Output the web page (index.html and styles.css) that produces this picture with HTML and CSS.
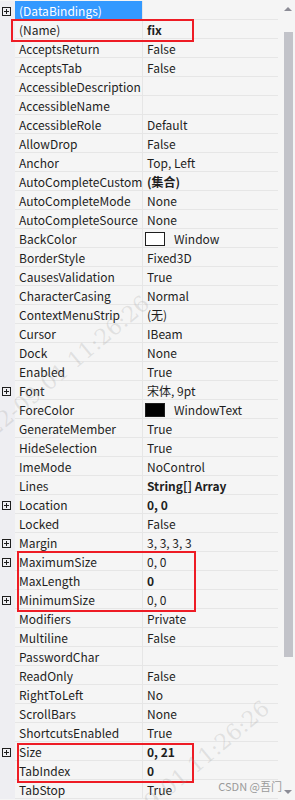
FILE: index.html
```html
<!DOCTYPE html>
<html lang="zh-CN">
<head>
  <meta charset="UTF-8">
  <meta name="viewport" content="width=device-width, initial-scale=1.0">
  <title>Properties</title>
  <link rel="stylesheet" href="styles.css">
</head>
<body>

  <div class="panel">
    <!-- Property rows -->
    <div class="props">
      <div class="row selected"><span class="gutter"><i class="plus"></i></span><span class="name">(DataBindings)</span><span class="value"></span></div>
      <div class="row"><span class="gutter"></span><span class="name">(Name)</span><span class="value bold">fix</span></div>
      <div class="row"><span class="gutter"></span><span class="name">AcceptsReturn</span><span class="value">False</span></div>
      <div class="row"><span class="gutter"></span><span class="name">AcceptsTab</span><span class="value">False</span></div>
      <div class="row"><span class="gutter"></span><span class="name">AccessibleDescription</span><span class="value"></span></div>
      <div class="row"><span class="gutter"></span><span class="name">AccessibleName</span><span class="value"></span></div>
      <div class="row"><span class="gutter"></span><span class="name">AccessibleRole</span><span class="value">Default</span></div>
      <div class="row"><span class="gutter"></span><span class="name">AllowDrop</span><span class="value">False</span></div>
      <div class="row"><span class="gutter"></span><span class="name">Anchor</span><span class="value">Top, Left</span></div>
      <div class="row"><span class="gutter"></span><span class="name">AutoCompleteCustomSource</span><span class="value bold">(集合)</span></div>
      <div class="row"><span class="gutter"></span><span class="name">AutoCompleteMode</span><span class="value">None</span></div>
      <div class="row"><span class="gutter"></span><span class="name">AutoCompleteSource</span><span class="value">None</span></div>
      <div class="row"><span class="gutter"></span><span class="name">BackColor</span><span class="value"><i class="swatch white"></i>Window</span></div>
      <div class="row"><span class="gutter"></span><span class="name">BorderStyle</span><span class="value">Fixed3D</span></div>
      <div class="row"><span class="gutter"></span><span class="name">CausesValidation</span><span class="value">True</span></div>
      <div class="row"><span class="gutter"></span><span class="name">CharacterCasing</span><span class="value">Normal</span></div>
      <div class="row"><span class="gutter"></span><span class="name">ContextMenuStrip</span><span class="value">(无)</span></div>
      <div class="row"><span class="gutter"></span><span class="name">Cursor</span><span class="value">IBeam</span></div>
      <div class="row"><span class="gutter"></span><span class="name">Dock</span><span class="value">None</span></div>
      <div class="row"><span class="gutter"></span><span class="name">Enabled</span><span class="value">True</span></div>
      <div class="row"><span class="gutter"><i class="plus"></i></span><span class="name">Font</span><span class="value">宋体, 9pt</span></div>
      <div class="row"><span class="gutter"></span><span class="name">ForeColor</span><span class="value"><i class="swatch black"></i>WindowText</span></div>
      <div class="row"><span class="gutter"></span><span class="name">GenerateMember</span><span class="value">True</span></div>
      <div class="row"><span class="gutter"></span><span class="name">HideSelection</span><span class="value">True</span></div>
      <div class="row"><span class="gutter"></span><span class="name">ImeMode</span><span class="value">NoControl</span></div>
      <div class="row"><span class="gutter"></span><span class="name">Lines</span><span class="value bold">String[] Array</span></div>
      <div class="row"><span class="gutter"><i class="plus"></i></span><span class="name">Location</span><span class="value bold">0, 0</span></div>
      <div class="row"><span class="gutter"></span><span class="name">Locked</span><span class="value">False</span></div>
      <div class="row"><span class="gutter"><i class="plus"></i></span><span class="name">Margin</span><span class="value">3, 3, 3, 3</span></div>
      <div class="row"><span class="gutter"><i class="plus"></i></span><span class="name">MaximumSize</span><span class="value">0, 0</span></div>
      <div class="row"><span class="gutter"></span><span class="name">MaxLength</span><span class="value bold">0</span></div>
      <div class="row"><span class="gutter"><i class="plus"></i></span><span class="name">MinimumSize</span><span class="value">0, 0</span></div>
      <div class="row"><span class="gutter"></span><span class="name">Modifiers</span><span class="value">Private</span></div>
      <div class="row"><span class="gutter"></span><span class="name">Multiline</span><span class="value">False</span></div>
      <div class="row"><span class="gutter"></span><span class="name">PasswordChar</span><span class="value"></span></div>
      <div class="row"><span class="gutter"></span><span class="name">ReadOnly</span><span class="value">False</span></div>
      <div class="row"><span class="gutter"></span><span class="name">RightToLeft</span><span class="value">No</span></div>
      <div class="row"><span class="gutter"></span><span class="name">ScrollBars</span><span class="value">None</span></div>
      <div class="row"><span class="gutter"></span><span class="name">ShortcutsEnabled</span><span class="value">True</span></div>
      <div class="row"><span class="gutter"><i class="plus"></i></span><span class="name">Size</span><span class="value bold">0, 21</span></div>
      <div class="row"><span class="gutter"></span><span class="name">TabIndex</span><span class="value bold">0</span></div>
      <div class="row"><span class="gutter"></span><span class="name">TabStop</span><span class="value">True</span></div>
    </div>

    <!-- Scrollbar -->
    <div class="scrollbar">
      <span class="arrow up"></span>
      <span class="thumb"></span>
      <span class="arrow down"></span>
    </div>

    <!-- Annotation boxes -->
    <div class="mark mark-name"></div>
    <div class="mark mark-size"></div>
    <div class="mark mark-tab"></div>

    <!-- Watermarks -->
    <div class="stamp stamp-top">2022-09-01 11:26:26</div>
    <div class="stamp stamp-bottom">2022-09-01 11:26:26</div>
    <div class="credit">CSDN @吾门</div>
  </div>

</body>
</html>
```

FILE: styles.css
```css
body {
  margin: 0;
  background-color: #f5f5f5;
  font-family: "Noto Sans CJK SC", "Noto Sans", sans-serif;
  font-size: 12px;
  color: #1e1e1e;
}
.panel {
  position: relative;
  display: flex;
  width: 295px;
  height: 800px;
  overflow: hidden;
}
.props {
  width: 278px;
  padding-top: 1px;
}
.row {
  display: flex;
  height: 19px;
}
.gutter {
  width: 15px;
  flex: none;
  display: flex;
  align-items: center;
  justify-content: center;
  background-color: #eeeef2;
}
.name, .value {
  box-sizing: border-box;
  height: 19px;
  padding-top: 2px;
  line-height: 16px;
  border-bottom: 1px solid #e6e6e6;
  white-space: nowrap;
  overflow: hidden;
}
.name {
  width: 128px;
  flex: none;
  padding-left: 4px;
  border-right: 1px solid #e6e6e6;
}
.value {
  flex: 1;
  padding-left: 4px;
  display: flex;
  align-items: center;
}
.bold {
  font-weight: bold;
}
.selected .name {
  background-color: #3399ff;
  color: #fff;
  border-bottom-color: #f5f5f5;
}
.plus {
  position: relative;
  width: 7px;
  height: 7px;
  border: 1px solid #1e1e1e;
  margin-left: -3px;
  margin-top: 2px;
}
.plus::before, .plus::after {
  content: "";
  position: absolute;
  background-color: #1e1e1e;
}
.plus::before {
  left: 1px;
  top: 3px;
  width: 5px;
  height: 1px;
}
.plus::after {
  left: 3px;
  top: 1px;
  width: 1px;
  height: 5px;
}
.swatch {
  width: 18px;
  height: 12px;
  border: 1px solid #1e1e1e;
  margin: 0 9px 0 -2px;
}
.swatch.white {
  background-color: #fff;
}
.swatch.black {
  background-color: #000;
}
.scrollbar {
  width: 17px;
  display: flex;
  flex-direction: column;
  align-items: center;
  padding-left: 3px;
  box-sizing: border-box;
}
.arrow {
  width: 0;
  height: 0;
  border-left: 4px solid transparent;
  border-right: 4px solid transparent;
}
.arrow.up {
  margin-top: 7px;
  border-bottom: 4px solid #8c8c96;
}
.arrow.down {
  margin-top: auto;
  margin-bottom: 6px;
  border-top: 4px solid #8c8c96;
}
.thumb {
  width: 9px;
  height: 625px;
  margin-top: 21px;
  background-color: #c2c3c9;
}
.mark {
  position: absolute;
  border: 2px solid #ee1c25;
  box-sizing: border-box;
}
.mark-name {
  left: 11px;
  top: 19px;
  width: 183px;
  height: 23px;
}
.mark-size {
  left: 17px;
  top: 551px;
  width: 179px;
  height: 61px;
}
.mark-tab {
  left: 17px;
  top: 743px;
  width: 177px;
  height: 40px;
}
.stamp {
  position: absolute;
  font-family: "DejaVu Serif", serif;
  font-size: 22px;
  color: rgba(150, 150, 150, 0.22);
  white-space: nowrap;
  transform: rotate(-40deg);
  transform-origin: left top;
}
.stamp-top {
  left: -40px;
  top: 440px;
}
.stamp-bottom {
  left: 80px;
  top: 845px;
}
.credit {
  position: absolute;
  right: 13px;
  bottom: 6px;
  font-size: 11px;
  color: #9a9a9a;
}
```
